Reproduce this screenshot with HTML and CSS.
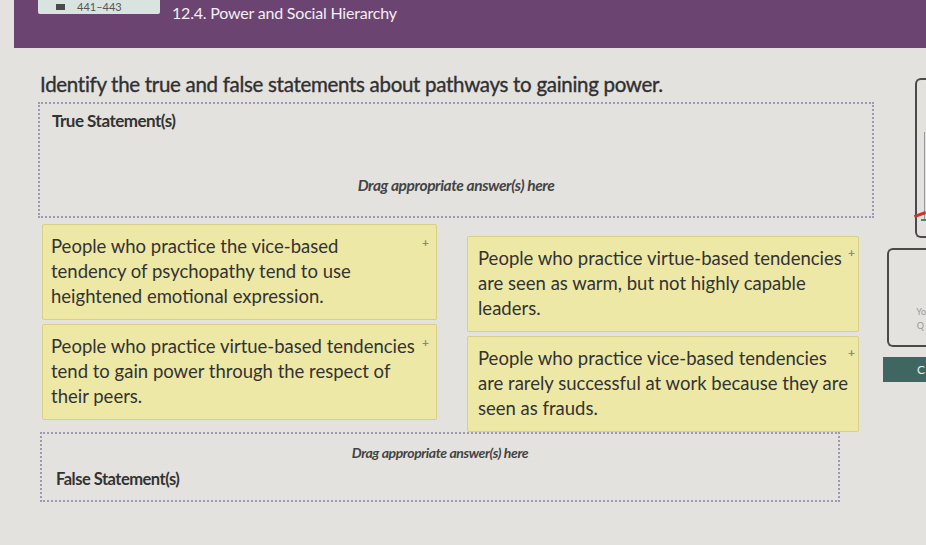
FILE: index.html
```html
<!DOCTYPE html>
<html>
<head>
<meta charset="utf-8">
<link rel="stylesheet" href="styles.css">
</head>
<body>
<div class="header">
  <div class="tab"><span class="tab-icon"></span><span class="tab-text">441–443</span></div>
  <div class="title">12.4. Power and Social Hierarchy</div>
</div>
<div class="content">
  <div class="main">
    <h1 class="question">Identify the true and false statements about pathways to gaining power.</h1>
    <div class="zone zone-true">
      <div class="zone-label">True Statement(s)</div>
      <div class="zone-hint">Drag appropriate answer(s) here</div>
    </div>
    <div class="cards">
      <div class="card"><span class="plus">+</span>People who practice the vice-based tendency of psychopathy tend to use heightened emotional expression.</div>
      <div class="card card-r"><span class="plus">+</span>People who practice virtue-based tendencies are seen as warm, but not highly capable leaders.</div>
      <div class="card"><span class="plus">+</span>People who practice virtue-based tendencies tend to gain power through the respect of their peers.</div>
      <div class="card card-r"><span class="plus">+</span>People who practice vice-based tendencies are rarely successful at work because they are seen as frauds.</div>
    </div>
    <div class="zone zone-false">
      <div class="zone-hint">Drag appropriate answer(s) here</div>
      <div class="zone-label">False Statement(s)</div>
    </div>
  </div>
  <div class="side">
    <div class="panel panel-1"><span class="chart-axis"></span><span class="chart-line"></span><span class="chart-base"></span></div>
    <div class="panel panel-2"><span class="small">Yo</span><span class="small q">Q</span></div>
    <div class="side-btn">C</div>
  </div>
</div>
</body>
</html>
```
FILE: styles.css
```css
html, body {
  margin: 0;
  padding: 0;
}
body {
  width: 926px;
  height: 545px;
  overflow: hidden;
  background: #e3e2de;
  font-family: Lato, "Open Sans", sans-serif;
  color: #3a3a3a;
}
.header {
  margin-left: 14px;
  height: 48px;
  background: #6b4472;
  display: flex;
  align-items: flex-start;
}
.tab {
  margin-left: 24px;
  width: 122px;
  height: 14px;
  background: #d9e4e0;
  border-radius: 0 0 2px 2px;
  display: flex;
  align-items: center;
  gap: 12px;
  padding-left: 18px;
  box-sizing: border-box;
}
.tab-icon {
  width: 9px;
  height: 6px;
  background: #4a4a4a;
}
.tab-text {
  font-size: 11px;
  color: #555;
  line-height: 12px;
}
.title {
  margin-left: 12px;
  margin-top: 3px;
  color: #f4eef4;
  font-size: 16px;
  letter-spacing: -0.2px;
}
.content {
  display: flex;
}
.main {
  width: 845px;
  padding-left: 40px;
}
.question {
  margin: 23px 0 5px 0;
  font-size: 20.5px;
  font-weight: 400;
  color: #303030;
  letter-spacing: -0.3px;
  line-height: 26px;
  -webkit-text-stroke: 0.35px #303030;
}
.zone {
  border: 2px dotted #9a9ab4;
  box-sizing: border-box;
  display: flex;
  flex-direction: column;
}
.zone-true {
  height: 116px;
  margin-left: -2px;
  width: 836px;
  padding: 6px 12px;
}
.zone-label {
  font-size: 17px;
  font-weight: 700;
  color: #333;
  letter-spacing: -0.5px;
}
.zone-hint {
  font-size: 15.5px;
  font-weight: 700;
  font-style: italic;
  color: #444;
  text-align: center;
  letter-spacing: -0.4px;
}
.zone-true .zone-hint {
  margin-top: auto;
  margin-bottom: 16px;
}
.cards {
  display: grid;
  grid-template-columns: 395px 392px;
  column-gap: 30px;
  row-gap: 4px;
  margin-top: 6px;
  margin-left: 2px;
}
.card {
  position: relative;
  background: #eee8a6;
  border: 1px solid #d8cf88;
  border-radius: 2px;
  padding: 9px 18px 10px 8px;
  font-size: 18.5px;
  line-height: 25px;
  color: #333;
  min-height: 96px;
  box-sizing: border-box;
}
.card-r {
  margin-top: 12px;
  margin-bottom: -12px;
  padding-left: 10px;
  padding-right: 10px;
}
.plus {
  position: absolute;
  top: 12px;
  right: 7px;
  font-size: 12px;
  line-height: 12px;
  font-weight: 700;
  color: #888;
}
.card-r .plus {
  right: 3px;
  top: 10px;
}
.zone-false {
  margin-top: 12px;
  width: 800px;
  height: 70px;
  padding: 8px 14px;
}
.zone-false .zone-hint {
  margin-top: 2px;
  font-size: 14px;
}
.zone-false .zone-label {
  margin-top: 8px;
  font-size: 16.5px;
}
.side {
  flex: 1;
  display: flex;
  flex-direction: column;
  align-items: flex-end;
  padding-top: 30px;
}
.panel {
  position: relative;
  border: 2px solid #4a4a4a;
  border-right: none;
  border-radius: 6px 0 0 6px;
  box-sizing: border-box;
}
.panel-1 {
  width: 11px;
  height: 160px;
}
.chart-axis {
  position: absolute;
  right: 1px;
  top: 52px;
  height: 88px;
  border-left: 1px solid #999;
}
.chart-line {
  position: absolute;
  left: -3px;
  top: 133px;
  width: 12px;
  border-top: 3px solid #c0392b;
  transform: rotate(-20deg);
}
.chart-base {
  position: absolute;
  left: 4px;
  right: 0;
  top: 139px;
  border-top: 2px solid #3d8a6a;
}
.panel-2 {
  margin-top: 10px;
  width: 39px;
  height: 99px;
  display: flex;
  flex-direction: column;
  align-items: flex-end;
  justify-content: flex-end;
  padding-bottom: 12px;
}
.small {
  font-size: 9px;
  line-height: 14px;
  color: #999;
}
.q {
  margin-right: 2px;
}
.side-btn {
  margin-top: 10px;
  width: 43px;
  height: 25px;
  background: #3f6660;
  color: #e6eeee;
  font-size: 12px;
  display: flex;
  align-items: center;
  justify-content: flex-end;
  padding-right: 1px;
  box-sizing: border-box;
}
```
